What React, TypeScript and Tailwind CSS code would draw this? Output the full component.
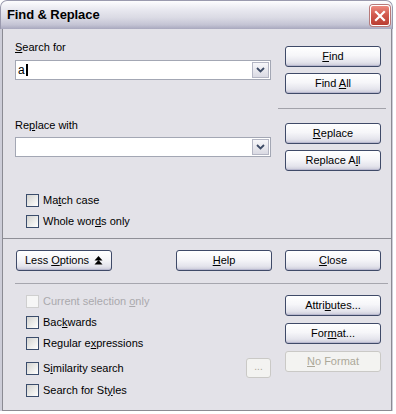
import React from "react";

const U = ({ children }: { children: React.ReactNode }) => (
  <span className="underline underline-offset-[1px] decoration-1">{children}</span>
);

const Btn = ({
  children,
  className = "",
  disabled = false,
}: {
  children: React.ReactNode;
  className?: string;
  disabled?: boolean;
}) => (
  <div
    className={
      disabled
        ? `flex items-center justify-center h-[21px] rounded-[3px] border border-[#cac9c6] bg-[#f3f3f1] text-[#aca899] text-[11px] leading-[13px] ${className}`
        : `flex items-center justify-center h-[21px] rounded-[3px] border border-[#3f4a68] bg-[linear-gradient(to_bottom,#ffffff_0%,#f6f6f9_45%,#e4e4ec_80%,#c9c9d8_100%)] text-black text-[11px] leading-[13px] shadow-[inset_0_-1px_0_#b9b9cf,inset_0_1px_0_#ffffff] ${className}`
    }
  >
    <span className="whitespace-pre">{children}</span>
  </div>
);

const Check = ({
  children,
  disabled = false,
  className = "",
}: {
  children: React.ReactNode;
  disabled?: boolean;
  className?: string;
}) => (
  <div className={`flex items-center h-[13px] ${className}`}>
    {disabled ? (
      <div className="w-[13px] h-[13px] border border-[#cfcfcf] bg-[#f6f6f6]" />
    ) : (
      <div className="w-[13px] h-[13px] border border-[#3b4d6c] bg-[linear-gradient(135deg,#d3d3d0_0%,#ececea_55%,#ffffff_100%)]" />
    )}
    <span
      className={
        disabled
          ? "ml-[4px] text-[11px] leading-[13px] text-[#aaa9ad]"
          : "ml-[4px] text-[11px] leading-[13px] text-black"
      }
    >
      {children}
    </span>
  </div>
);

const Combo = ({ children }: { children?: React.ReactNode }) => (
  <div className="flex items-center h-[20px] w-[256px] border border-[#a3a7b4] bg-white">
    <div className="flex-1 flex items-center pl-[2px] text-[12px] leading-[14px] text-black">
      {children}
    </div>
    <div className="w-[17px] h-[16px] mr-[1px] border border-[#b4b6c4] bg-[linear-gradient(to_bottom,#f7f7fa,#dadae3)] flex items-center justify-center">
      <svg width="9" height="6" viewBox="0 0 9 6">
        <path d="M1 1 L4.5 4.5 L8 1" fill="none" stroke="#3d4b66" strokeWidth="1.8" />
      </svg>
    </div>
  </div>
);

export default function App() {
  return (
    <div
      className="w-[396px] h-[414px] bg-white overflow-hidden"
      style={{ fontFamily: '"Liberation Sans", Arial, sans-serif' }}
    >
      <div className="w-[393px] h-[411px] flex flex-col rounded-t-[7px] overflow-hidden bg-[#cdcdd8]">
        {/* Title bar */}
        <div className="h-[29px] shrink-0 flex items-center justify-between rounded-t-[7px] border-t border-x border-[#9a9aae] bg-[linear-gradient(to_bottom,#fdfdfe_0%,#e9e9f0_30%,#dadae4_60%,#c4c4d4_85%,#a8a8be_100%)]">
          <span className="pl-[6px] text-[13px] font-bold text-black tracking-[-0.1px]">
            Find &amp; Replace
          </span>
          <div className="mr-[2px] mt-[1px] w-[20px] h-[21px] rounded-[3px] border border-white bg-[linear-gradient(to_bottom,#ec8b80_0%,#d25a4e_45%,#b93c31_100%)] flex items-center justify-center shadow-[0_0_0_1px_#b77a7a]">
            <svg width="12" height="12" viewBox="0 0 12 12">
              <path d="M2 2 L10 10 M10 2 L2 10" stroke="white" strokeWidth="2.2" strokeLinecap="square" />
            </svg>
          </div>
        </div>

        {/* Body */}
        <div className="flex-1 ml-[2px] mr-[1px] pt-[1px] border-x border-b border-[#8b8b93] bg-[#e3e2e8] flex flex-col">
          {/* Top section */}
          <div className="flex pl-[12px] pb-[10px]">
            <div className="w-[256px] flex flex-col">
              <div className="mt-[11px] text-[11px] leading-[13px] text-black">
                <U>S</U>earch for
              </div>
              <div className="mt-[6px]">
                <Combo>
                  <span>a</span>
                  <span className="ml-[1px] w-[2px] h-[12px] bg-black" />
                </Combo>
              </div>
              <div className="mt-[39px] text-[11px] leading-[13px] text-black">
                Re<U>p</U>lace with
              </div>
              <div className="mt-[5px]">
                <Combo />
              </div>
              <Check className="mt-[37px] ml-[11px]">
                Ma<U>t</U>ch case
              </Check>
              <Check className="mt-[8px] ml-[11px]">
                Whole wor<U>d</U>s only
              </Check>
            </div>
            <div className="ml-[14px] w-[96px] flex flex-col">
              <Btn className="mt-[16px]">
                <U>F</U>ind
              </Btn>
              <Btn className="mt-[6px]">
                Find <U>A</U>ll
              </Btn>
              <div className="mt-[14px] -ml-[7px] -mr-[5px] h-px bg-[#a2a2aa]" />
              <Btn className="mt-[14px]">
                <U>R</U>eplace
              </Btn>
              <Btn className="mt-[6px]">
                Replace A<U>l</U>l
              </Btn>
            </div>
          </div>

          <div className="h-px bg-[#8f8f97]" />

          {/* Middle buttons */}
          <div className="flex mt-[11px] pl-[13px]">
            <div className="w-[96px] flex items-center justify-center h-[21px] rounded-[3px] border border-[#3f4a68] bg-[linear-gradient(to_bottom,#ffffff_0%,#f6f6f9_45%,#e4e4ec_80%,#c9c9d8_100%)] text-black text-[11px] leading-[13px] shadow-[inset_0_-1px_0_#b9b9cf,inset_0_1px_0_#ffffff]">
              <span className="whitespace-pre">
                Less <U>O</U>ptions
              </span>
              <svg className="ml-[5px]" width="9" height="9" viewBox="0 0 9 9">
                <path d="M4.5 0 L8.5 4.5 L0.5 4.5 Z" fill="black" />
                <path d="M4.5 4 L8.5 8.5 L0.5 8.5 Z" fill="black" />
              </svg>
            </div>
            <Btn className="w-[96px] ml-[64px]">
              <U>H</U>elp
            </Btn>
            <Btn className="w-[96px] ml-[13px]">
              <U>C</U>lose
            </Btn>
          </div>

          <div className="mt-[12px] ml-[12px] mr-[3px] h-px bg-[#a6a6ae]" />

          {/* Lower section */}
          <div className="flex pl-[23px]">
            <div className="w-[210px] flex flex-col">
              <Check disabled className="mt-[11px]">
                Current selection <U>o</U>nly
              </Check>
              <Check className="mt-[8px]">
                Bac<U>k</U>wards
              </Check>
              <Check className="mt-[8px]">
                Regular e<U>x</U>pressions
              </Check>
              <Check className="mt-[12px]">
                S<U>i</U>milarity search
              </Check>
              <Check className="mt-[9px]">
                Search for St<U>y</U>les
              </Check>
            </div>
            <div className="ml-[10px] w-[25px] flex flex-col">
              <div className="mt-[74px] h-[20px] w-[25px] rounded-[3px] border border-[#cac9c6] bg-[#f3f3f1] flex items-center justify-center text-[10px] leading-[10px] text-[#aca899] pb-[3px]">
                ...
              </div>
            </div>
            <div className="ml-[14px] w-[96px] flex flex-col">
              <Btn className="mt-[11px]">
                Attri<U>b</U>utes...
              </Btn>
              <Btn className="mt-[7px]">
                For<U>m</U>at...
              </Btn>
              <Btn disabled className="mt-[7px]">
                <U>N</U>o Format
              </Btn>
            </div>
          </div>
        </div>
      </div>
    </div>
  );
}
